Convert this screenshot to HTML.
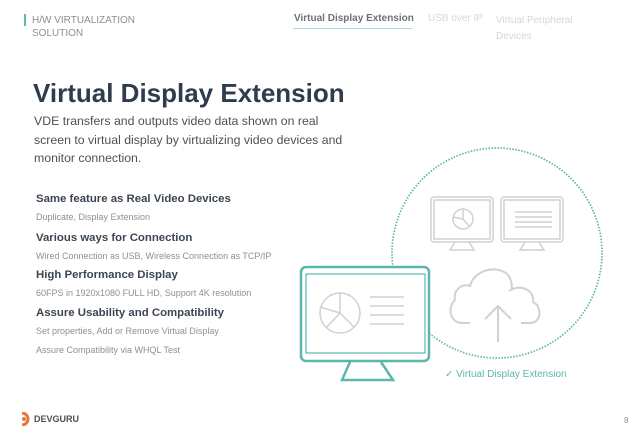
<!DOCTYPE html>
<html><head><meta charset="utf-8"><style>
*{margin:0;padding:0}
body{width:638px;height:442px;background:#fff;position:relative;overflow:hidden;font-family:"Liberation Sans",sans-serif}
.a{position:absolute;white-space:nowrap}
.h{font-size:11.4px;font-weight:bold;color:#3c4650}
.s{font-size:9px;color:#8a9096}
</style></head><body>
<div class="a" style="left:24px;top:14px;width:2px;height:12px;background:#5bbcb2"></div>
<div class="a" style="left:32px;top:14px;font-size:10px;line-height:13px;color:#8a9096">H/W VIRTUALIZATION<br>SOLUTION</div>
<div class="a" style="left:294px;top:13px;font-size:10px;font-weight:bold;color:#6a7178">Virtual Display Extension</div>
<div class="a" style="left:293px;top:28px;width:119px;height:1px;background:#a9ddd7"></div>
<div class="a" style="left:428px;top:13px;font-size:10px;color:#d4d7da">USB over IP</div>
<div class="a" style="left:496px;top:13px;font-size:10px;line-height:16px;color:#d4d7da">Virtual Peripheral<br>Devices</div>
<div class="a" style="left:33px;top:78px;font-size:26px;font-weight:bold;color:#2e3c4e">Virtual Display Extension</div>
<div class="a" style="left:34px;top:112px;font-size:12.3px;line-height:18.5px;color:#4a5158">VDE transfers and outputs video data shown on real<br>screen to virtual display by virtualizing video devices and<br>monitor connection.</div>
<div class="a h" style="left:36px;top:193px">Same feature as Real Video Devices</div>
<div class="a s" style="left:36px;top:212px">Duplicate, Display Extension</div>
<div class="a h" style="left:36px;top:232px">Various ways for Connection</div>
<div class="a s" style="left:36px;top:251px">Wired Connection as USB, Wireless Connection as TCP/IP</div>
<div class="a h" style="left:36px;top:269px">High Performance Display</div>
<div class="a s" style="left:36px;top:288px">60FPS in 1920x1080 FULL HD, Support 4K resolution</div>
<div class="a h" style="left:36px;top:307px">Assure Usability and Compatibility</div>
<div class="a s" style="left:36px;top:326px">Set properties, Add or Remove Virtual Display</div>
<div class="a s" style="left:36px;top:345px">Assure Compatibility via WHQL Test</div>
<svg class="a" style="left:0;top:0" width="638" height="442">
<circle cx="497" cy="253" r="105" fill="none" stroke="#5bb6ad" stroke-width="1.7" stroke-dasharray="1.5 1.5"/>
<g fill="none" stroke="#cfd1d3" stroke-width="1.5">
<rect x="431" y="197" width="62" height="45" rx="3" fill="#fff"/><rect x="434" y="200" width="56" height="39"/>
<path d="M455 242 L450 250 H474 L469 242"/>
<rect x="501" y="197" width="62" height="45" rx="3" fill="#fff"/><rect x="504" y="200" width="56" height="39"/>
<path d="M525 242 L520 250 H544 L539 242"/>
<circle cx="463" cy="219" r="10"/><path d="M463 209 V219 L470 227 M463 219 L453 217"/>
<path d="M515 212H552M515 217H552M515 222H552M515 227H552"/>
<path d="M470 323 H462 C450 323 447 307 455 300 C453 290 462 283 470 286 C474 270 497 264 508 275 C513 282 512 290 511 290 C520 284 535 290 533 302 C542 306 542 323 530 323 H521" stroke-width="2"/>
<path d="M498 342 V306 M485 319 L498 306 L511 319" stroke-width="2"/>
</g>
<g fill="none" stroke="#5bb6ad" stroke-width="2.5">
<rect x="301" y="267" width="128" height="94" rx="5" fill="#fff"/>
<path d="M350 362 L342 380 H393 L381 362"/>
</g>
<rect x="306" y="274" width="119" height="79" fill="none" stroke="#5bb6ad" stroke-width="1.2"/>
<g fill="none" stroke="#cfd1d3" stroke-width="1.5">
<circle cx="340" cy="313" r="20"/><path d="M340 293 V313 L354 327 M340 313 L320 307 M340 313 L326 328"/>
<path d="M370 297H404M370 306H404M370 315H404M370 324H404"/>
</g>
</svg>
<div class="a" style="left:445px;top:369px;font-size:10px;color:#5bb6ad">✓ Virtual Display Extension</div>
<svg class="a" style="left:18px;top:412px" width="14" height="14"><path d="M4 1 A6 6 0 1 1 4 13" fill="none" stroke="#e8763a" stroke-width="3"/><circle cx="6" cy="7" r="2" fill="#e8763a"/></svg>
<div class="a" style="left:34px;top:414px;font-size:9px;font-weight:bold;color:#4a5158">DEVGURU</div>
<div class="a" style="left:624px;top:416px;font-size:8px;color:#8a9096">8</div>
</body></html>
